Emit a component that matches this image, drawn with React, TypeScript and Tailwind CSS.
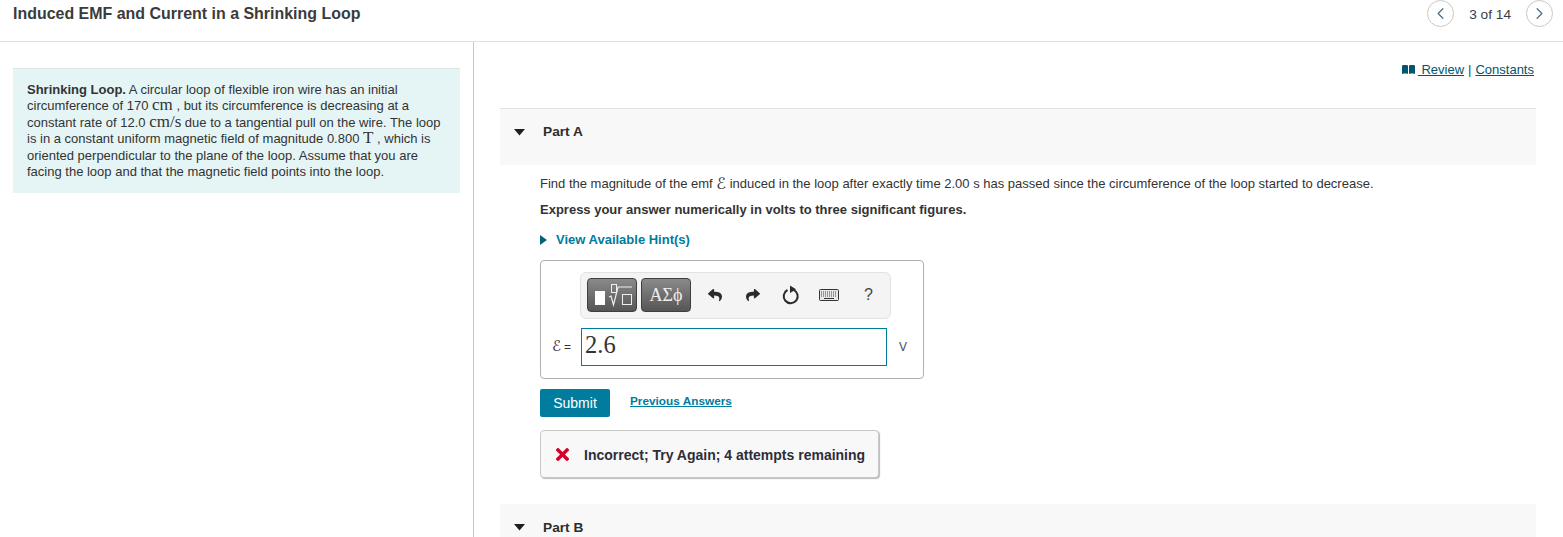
import { ChevronLeft, ChevronRight } from "lucide-react";
import { FaReply, FaShare } from "react-icons/fa";

const serif = "font-['Liberation_Serif',serif]";
const mathInline = "font-['Liberation_Serif',serif] text-[17px] leading-[0]";

function Caret() {
  return (
    <svg width="12" height="7" viewBox="0 0 12 7" className="shrink-0">
      <path d="M0 0h11L5.5 6.5z" fill="#1f1f1f" />
    </svg>
  );
}

function Emf({ className }: { className?: string }) {
  return <span className={`font-['DejaVu_Sans',sans-serif] leading-none ${className ?? ""}`}>ℰ</span>;
}

function BookIcon() {
  return (
    <svg width="13" height="9" viewBox="0 0 13 9" className="mr-[3px] shrink-0">
      <path d="M0 0.5c2 -0.6 4 -0.6 6 0v8.5c-2 -0.6 -4 -0.6 -6 0zM7 0.5c2 -0.6 4 -0.6 6 0v8.5c-2 -0.6 -4 -0.6 -6 0z" fill="#00566f" />
    </svg>
  );
}

function ReloadIcon() {
  return (
    <svg width="18" height="20" viewBox="0 0 18 20" fill="none">
      <path d="M11.500 4.800a7 7 0 1 1 -6 0.200" stroke="#2b2b2b" strokeWidth="2" />
      <path d="M8 0.500l6 3.800 -6 3.700z" fill="#2b2b2b" />
    </svg>
  );
}

function Keyboard() {
  return (
    <svg width="20" height="12" viewBox="0 0 20 12">
      <rect x="0.5" y="0.5" width="19" height="11" rx="1" fill="#e8e8e8" stroke="#333" />
      <path d="M2 3h16M2 5h16M2 7h16" stroke="#444" strokeWidth="1" strokeDasharray="1 1" />
      <path d="M5 9.5h10" stroke="#333" strokeWidth="1" />
    </svg>
  );
}

function MathTemplateIcon() {
  return (
    <svg width="48" height="32" viewBox="1 1 48 32">
      <rect x="8" y="13" width="10" height="14" fill="#fff" />
      <rect x="24.500" y="6.500" width="5" height="8" fill="none" stroke="#eee" />
      <path d="M22 19l2 -1 2.500 9 4.500 -18h14" fill="none" stroke="#eee" strokeWidth="1.2" />
      <rect x="35.500" y="16.500" width="9" height="10" fill="none" stroke="#eee" />
    </svg>
  );
}

export default function App() {
  return (
    <div className="flex h-[537px] w-[1563px] flex-col overflow-hidden bg-white font-['Liberation_Sans',sans-serif] text-[#333]">
      <header className="flex h-[42px] shrink-0 items-start justify-between border-b border-[#e0e0e0] pl-[13px] pr-[10px]">
        <h1 className="mt-[4px] text-[15.96px] font-bold leading-[19px] text-[#3b3b3b]">
          Induced EMF and Current in a Shrinking Loop
        </h1>
        <div className="flex items-center">
          <button type="button" className="flex h-[27px] w-[27px] items-center justify-center rounded-full border border-[#c8c8c8] text-[#4f6f86]">
            <ChevronLeft size={19} strokeWidth={1.6} />
          </button>
          <span className="mx-[15px] pt-[3px] text-[13.7px] text-[#3c3c4c]">3 of 14</span>
          <button type="button" className="flex h-[27px] w-[27px] items-center justify-center rounded-full border border-[#c8c8c8] text-[#4f6f86]">
            <ChevronRight size={19} strokeWidth={1.6} />
          </button>
        </div>
      </header>

      <div className="flex min-h-0 flex-1">
        <aside className="w-[474px] shrink-0 border-r border-[#c9c9c9] pl-[13px] pr-[13px] pt-[26px]">
          <div className="h-[125px] border-t border-[#dde4e4] bg-[#e5f5f6] pl-[14px] pr-[16px] pt-[13px] text-[13px] leading-[16.4px] text-[#333]">
            <b>Shrinking Loop.</b> A circular loop of flexible iron wire has an initial circumference of 170 <span className={mathInline}>cm</span> , but its circumference is decreasing at a constant rate of 12.0 <span className={mathInline}>cm/s</span> due to a tangential pull on the wire. The loop is in a constant uniform magnetic field of magnitude 0.800 <span className={mathInline}>T</span> , which is oriented perpendicular to the plane of the loop. Assume that you are facing the loop and that the magnetic field points into the loop.
          </div>
        </aside>

        <main className="min-w-0 flex-1 pl-[26px] pr-[27px]">
          <div className="mr-[2px] flex h-[66px] items-center justify-end pb-[20px] pt-[9px] text-[13px] text-[#00566f]">
            <BookIcon />
            <a className="underline" href="#review">&nbsp;Review</a>
            <span className="mx-[4px]">|</span>
            <a className="underline" href="#constants">Constants</a>
          </div>

          <section className="flex h-[57px] items-center border-t border-[#e0e0e0] bg-[#f8f8f8] pb-[10px] pl-[14px]">
            <Caret />
            <h2 className="ml-[17px] text-[13.7px] font-bold text-[#2d2d2d]">Part A</h2>
          </section>

          <div className="pl-[40px]">
            <p className="mt-[9px] flex h-[20px] items-center whitespace-pre text-[13px] text-[#333]">
              Find the magnitude of the emf <Emf className="text-[16px]" /> induced in the loop after exactly time 2.00 s has passed since the circumference of the loop started to decrease.
            </p>
            <p className="mt-[6px] text-[13px] font-bold leading-[20px] text-[#333]">
              Express your answer numerically in volts to three significant figures.
            </p>
            <div className="mt-[10px] flex items-center text-[13px] font-bold text-[#007c9e]">
              <svg width="8" height="10" viewBox="0 0 8 10" className="mr-[8px]">
                <path d="M0 0l7 5-7 5z" fill="#00637e" />
              </svg>
              View Available Hint(s)
            </div>

            <div className="mt-[10px] h-[119px] w-[384px] rounded-[4px] border border-[#b0b0b0] pt-[11px]">
              <div className="ml-[39px] flex h-[47px] w-[311px] items-center rounded-[6px] border border-[#e2e2e2] bg-[#f4f4f4] pl-[6px]">
                <div className="flex h-[34px] w-[50px] items-center justify-center rounded-[4px] border border-[#3f3f3f] bg-gradient-to-b from-[#8a8a8a] to-[#565656]">
                  <MathTemplateIcon />
                </div>
                <div className={`ml-[4px] flex h-[34px] w-[50px] items-center justify-center rounded-[4px] border border-[#3f3f3f] bg-gradient-to-b from-[#8a8a8a] to-[#565656] text-[18px] text-[#eee] ${serif}`}>
                  ΑΣϕ
                </div>
                <FaReply size={14} className="ml-[17px] text-[#2b2b2b]" />
                <FaShare size={14} className="ml-[24px] text-[#2b2b2b]" />
                <div className="ml-[22px]"><ReloadIcon /></div>
                <div className="ml-[19px]"><Keyboard /></div>
                <span className="ml-[25px] text-[16px] text-[#444]">?</span>
              </div>
              <div className="mt-[9px] flex items-center">
                <div className="ml-[11px] flex w-[29px] items-center">
                  <Emf className="text-[15px]" />
                  <span className="ml-[3px] text-[12px]">=</span>
                </div>
                <div className={`flex h-[38px] w-[306px] items-center border border-[#007c9e] pb-[2px] pl-[3px] text-[24.5px] text-[#333] ${serif}`}>
                  2.6
                </div>
                <span className="ml-[12px] text-[12px] text-[#3c4c5c]">V</span>
              </div>
            </div>

            <div className="mt-[10px] flex items-start">
              <button type="button" className="h-[28px] w-[70px] rounded-[2px] bg-[#007c9e] pt-[1px] text-[14px] text-white">
                Submit
              </button>
              <a href="#previous" className="ml-[20px] mt-[4px] text-[11.8px] font-bold text-[#007c9e] underline">
                Previous Answers
              </a>
            </div>

            <div className="mt-[13px] flex h-[48px] w-[339px] items-center rounded-[4px] border border-[#c8c8c8] bg-[#f8f8f8] pl-[15px] pt-[3px] shadow-[1px_1px_1px_#bbb]">
              <svg width="13" height="13" viewBox="0 0 13 13" className="mt-[-2px]">
                <path d="M2 2l9 9M11 2l-9 9" stroke="#d4002a" strokeWidth="3.4" strokeLinecap="square" />
              </svg>
              <span className="ml-[15px] text-[14px] font-bold text-[#2d2d3a]">Incorrect; Try Again; 4 attempts remaining</span>
            </div>
          </div>

          <section className="mt-[26px] flex h-[58px] items-start bg-[#f8f8f8] pl-[14px] pt-[16px]">
            <div className="flex h-[16px] items-center"><Caret /></div>
            <h2 className="ml-[17px] text-[13.7px] font-bold leading-[16px] text-[#2d2d2d]">Part B</h2>
          </section>
        </main>
      </div>
    </div>
  );
}
